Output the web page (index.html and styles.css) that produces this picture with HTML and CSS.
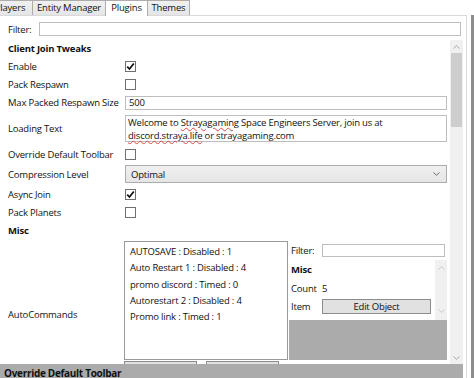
FILE: index.html
```html
<!DOCTYPE html>
<html lang="en">
<head>
    <meta charset="UTF-8">
    <title>Torch - Plugins</title>
    <link rel="stylesheet" href="styles.css">
</head>
<body>
    <div class="window">
        <div class="tabs">
            <div class="tab first">Players</div>
            <div class="tab entity">Entity Manager</div>
            <div class="tab active">Plugins</div>
            <div class="tab">Themes</div>
        </div>

        <div class="main">
            <div class="panel">
                <div class="filter-row">
                    <span class="filter-label">Filter:</span>
                    <div class="input wide"></div>
                </div>

                <div class="scroll-area">
                    <div class="props">
                        <div class="row head">Client Join Tweaks</div>
                        <div class="row">
                            <span class="label">Enable</span>
                            <span class="check"><svg width="9" height="9" viewBox="0 0 9 9"><path d="M1.2 4.6 L3.5 7 L7.8 1.4" fill="none" stroke="#111" stroke-width="1.7"/></svg></span>
                        </div>
                        <div class="row">
                            <span class="label">Pack Respawn</span>
                            <span class="check"></span>
                        </div>
                        <div class="row tall">
                            <span class="label">Max Packed Respawn Size</span>
                            <div class="input value">500</div>
                        </div>
                        <div class="row text-row">
                            <span class="label">Loading Text</span>
                            <div class="textbox value">Welcome to <span class="typo">Strayagaming</span> Space Engineers Server, join us at<br><span class="typo">discord.straya.life</span> or strayagaming.com</div>
                        </div>
                        <div class="row">
                            <span class="label">Override Default Toolbar</span>
                            <span class="check"></span>
                        </div>
                        <div class="row combo-row">
                            <span class="label">Compression Level</span>
                            <div class="combo value">
                                <span>Optimal</span>
                                <svg width="7" height="4" viewBox="0 0 7 4"><path d="M0.5 0.5 L3.5 3.3 L6.5 0.5" fill="none" stroke="#6a6a6a" stroke-width="1"/></svg>
                            </div>
                        </div>
                        <div class="row">
                            <span class="label">Async Join</span>
                            <span class="check"><svg width="9" height="9" viewBox="0 0 9 9"><path d="M1.2 4.6 L3.5 7 L7.8 1.4" fill="none" stroke="#111" stroke-width="1.7"/></svg></span>
                        </div>
                        <div class="row">
                            <span class="label">Pack Planets</span>
                            <span class="check"></span>
                        </div>
                        <div class="row head misc">Misc</div>

                        <div class="row auto-row">
                            <span class="label">AutoCommands</span>
                            <div class="auto-box">
                                <div class="list-col">
                                    <ul class="listbox">
                                        <li>AUTOSAVE : Disabled : 1</li>
                                        <li>Auto Restart 1 : Disabled : 4</li>
                                        <li>promo discord : Timed : 0</li>
                                        <li>Autorestart 2 : Disabled : 4</li>
                                        <li>Promo link : Timed : 1</li>
                                    </ul>
                                    <div class="list-buttons">
                                        <div class="btn small"></div>
                                        <div class="btn small"></div>
                                    </div>
                                </div>
                                <div class="pgrid">
                                    <div class="pg-filter">
                                        <span class="pg-label">Filter:</span>
                                        <div class="input pg-input"></div>
                                    </div>
                                    <div class="pg-body">
                                        <div class="pg-rows">
                                            <div class="pg-row bold">Misc</div>
                                            <div class="pg-row"><span class="pg-label">Count</span><span>5</span></div>
                                            <div class="pg-row item"><span class="pg-label">Item</span><div class="btn edit">Edit Object</div></div>
                                        </div>
                                        <div class="mini-scroll">
                                            <svg width="7" height="4" viewBox="0 0 7 4"><path d="M0.5 3.5 L3.5 0.7 L6.5 3.5" fill="none" stroke="#c8c8c8" stroke-width="1"/></svg>
                                            <svg width="7" height="4" viewBox="0 0 7 4"><path d="M0.5 0.5 L3.5 3.3 L6.5 0.5" fill="none" stroke="#c8c8c8" stroke-width="1"/></svg>
                                        </div>
                                    </div>
                                    <div class="pg-desc"></div>
                                </div>
                            </div>
                        </div>
                    </div>

                    <div class="vscroll">
                        <div class="arrow"><svg width="7" height="4" viewBox="0 0 7 4"><path d="M0.5 3.5 L3.5 0.7 L6.5 3.5" fill="none" stroke="#a6a6a6" stroke-width="1"/></svg></div>
                        <div class="thumb"></div>
                        <div class="track"></div>
                        <div class="arrow"><svg width="7" height="4" viewBox="0 0 7 4"><path d="M0.5 0.5 L3.5 3.3 L6.5 0.5" fill="none" stroke="#a6a6a6" stroke-width="1"/></svg></div>
                    </div>
                </div>

                <div class="group-bar">Override Default Toolbar</div>
            </div>
            <div class="edge"></div>
        </div>
    </div>
</body>
</html>
```

FILE: styles.css
```css
body {
    margin: 0;
    font-family: "Open Sans", "Noto Sans", sans-serif;
    font-size: 9.5px;
    letter-spacing: -0.2px;
    color: #111;
    background: #fff;
}
.window {
    width: 474px;
    height: 378px;
    overflow: hidden;
}

/* tab strip */
.tabs {
    display: flex;
    align-items: flex-end;
    height: 15px;
}
.tab {
    width: 43px;
    height: 15px;
    box-sizing: border-box;
    text-align: center;
    line-height: 14px;
    border: 1px solid #acacac;
    border-bottom: none;
    margin-right: -1px;
    background: linear-gradient(to bottom, #f0f0f0, #e5e5e5);
}
.tab.first {
    width: 46px;
    margin-left: -13px;
}
.tab.entity {
    width: 74px;
}
.tab.active {
    position: relative;
    z-index: 1;
    height: 16px;
    margin-bottom: -1px;
    line-height: 13px;
    background: #fff;
}

.main {
    display: flex;
}
.panel {
    width: 467px;
    box-sizing: border-box;
    border-top: 1px solid #d9d9d9;
    border-right: 1px solid #d9d9d9;
}
.edge {
    width: 3px;
    margin-left: 4px;
    background: #8d8d8d;
}

/* inputs */
.input {
    height: 14px;
    box-sizing: border-box;
    border: 1px solid #bdbdbd;
    background: #fff;
    padding-left: 3px;
    line-height: 12px;
}
.filter-row {
    display: flex;
    align-items: center;
    padding: 6px 5px 4px 8px;
}
.filter-label {
    width: 31px;
}
.wide {
    flex: 1;
}

.scroll-area {
    display: flex;
    height: 324px;
    overflow: hidden;
}
.props {
    width: 442px;
    padding-left: 8px;
}
.row {
    display: flex;
    align-items: center;
    height: 18px;
}
.row.head {
    height: 17px;
    font-weight: bold;
}
.row.misc {
    height: 19px;
}
.row.tall {
    height: 19px;
}
.row.text-row {
    height: 33px;
}
.row.combo-row {
    height: 22px;
}
.label {
    width: 117px;
    flex-shrink: 0;
    white-space: nowrap;
}
.value {
    width: 322px;
}
.check {
    width: 11px;
    height: 11px;
    box-sizing: border-box;
    border: 1px solid #707070;
    background: #fff;
    display: flex;
    align-items: center;
    justify-content: center;
}
.textbox {
    height: 27px;
    box-sizing: border-box;
    border: 1px solid #bdbdbd;
    padding: 1px 0 0 2px;
    line-height: 12.5px;
}
.typo {
    text-decoration: underline wavy #e04848;
    text-decoration-thickness: 1px;
    text-underline-offset: 1px;
}
.combo {
    height: 18px;
    box-sizing: border-box;
    border: 1px solid #acacac;
    background: linear-gradient(to bottom, #f0f0f0, #e5e5e5);
    display: flex;
    align-items: center;
    justify-content: space-between;
    padding: 0 6px 0 5px;
}

/* auto commands */
.row.auto-row {
    height: 148px;
    align-items: center;
}
.auto-box {
    display: flex;
    align-self: flex-start;
    margin-top: 1px;
    margin-left: -1px;
}
.list-col {
    width: 164px;
}
.listbox {
    list-style: none;
    margin: 0;
    padding: 2px 0 0 5px;
    height: 119px;
    box-sizing: border-box;
    border: 1px solid #9a9a9a;
    line-height: 16.3px;
}
.list-buttons {
    display: flex;
    gap: 9px;
    margin-top: 1px;
}
.btn {
    box-sizing: border-box;
    border: 1px solid #8c8c8c;
    background: #e1e1e1;
    text-align: center;
}
.btn.small {
    width: 73px;
    height: 20px;
}
.pgrid {
    width: 158px;
    margin-left: 1px;
}
.pg-filter {
    display: flex;
    align-items: center;
    height: 19px;
    padding-left: 2px;
}
.pg-label {
    width: 31px;
    flex-shrink: 0;
}
.pg-input {
    width: 123px;
    height: 13px;
}
.pg-body {
    display: flex;
    height: 60px;
    background: #fff;
}
.pg-rows {
    width: 145px;
    padding-left: 2px;
}
.pg-row {
    display: flex;
    align-items: center;
    height: 18px;
}
.pg-row.bold {
    height: 19px;
    font-weight: bold;
}
.pg-row.item {
    height: 19px;
}
.btn.edit {
    width: 109px;
    height: 15px;
    line-height: 13px;
}
.mini-scroll {
    width: 12px;
    background: #f0f0f0;
    display: flex;
    flex-direction: column;
    align-items: center;
    justify-content: space-between;
    padding: 6px 0 7px;
    box-sizing: border-box;
}
.pg-desc {
    height: 40px;
    background: #ababab;
}

/* main scrollbar */
.vscroll {
    width: 13px;
    display: flex;
    flex-direction: column;
    background: #f0f0f0;
}
.vscroll .arrow {
    height: 13px;
    display: flex;
    align-items: center;
    justify-content: center;
}
.thumb {
    height: 74px;
    margin: 0 1px;
    background: #cdcdcd;
}
.track {
    flex: 1;
}

.group-bar {
    width: 463px;
    height: 14px;
    background: #ababab;
    padding-left: 4px;
    box-sizing: border-box;
    font-weight: bold;
    font-size: 10px;
    letter-spacing: -0.3px;
    line-height: 18px;
    overflow: hidden;
}
```
